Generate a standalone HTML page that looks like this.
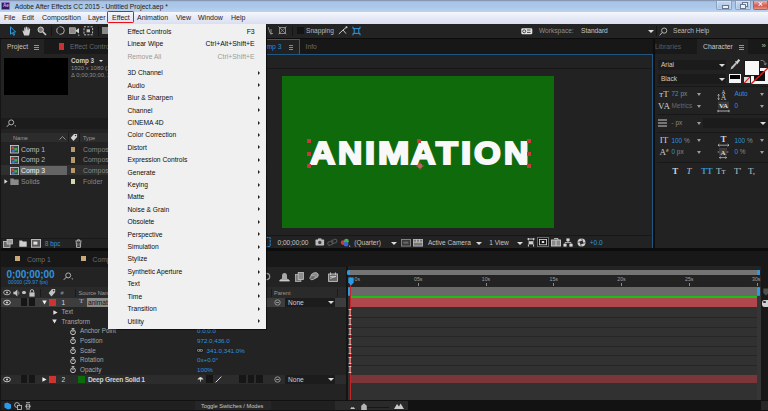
<!DOCTYPE html>
<html><head><meta charset="utf-8">
<style>
html,body{margin:0;padding:0;}
body{width:768px;height:411px;overflow:hidden;background:#242424;position:relative;font-family:"Liberation Sans",sans-serif;font-size:7px;color:#b8b8b8;}
div,span,svg{position:absolute;white-space:nowrap;}
.t{line-height:10px;height:10px;}
.blue{color:#3192de;}
#menu .i{left:19.5px;color:#0c0c0c;font-size:6.7px;line-height:10px;height:10px;}
#menu .s{right:11.5px;color:#0c0c0c;font-size:6.9px;line-height:10px;height:10px;}
#menu .a{left:149.5px;width:0;height:0;border-left:2.6px solid #222;border-top:2.4px solid transparent;border-bottom:2.4px solid transparent;}
.dd{width:0;height:0;border-top:3.4px solid #dadada;border-left:3px solid transparent;border-right:3px solid transparent;}
.dds{width:0;height:0;border-top:3px solid #9c9c9c;border-left:2.1px solid transparent;border-right:2.1px solid transparent;}
.sw{width:6px;height:8px;background:#161616;}
.row{left:0;width:346px;height:9.6px;}
.lab{left:80px;color:#a6a6a6;font-size:6.3px;line-height:9.6px;top:0;}
.val{left:197px;color:#3192de;font-size:6.2px;line-height:9.6px;top:0;}
</style></head><body>
<div id="title" style="left:0;top:0;width:768px;height:11.6px;background:linear-gradient(#6f7b93 0,#9db5d6 1px,#a7c3e6 2px,#acc8e9 7px,#b9d2ee 11.6px);">
  <div style="left:1.4px;top:1.8px;width:8.2px;height:7.8px;background:#2c1c58;border:0.7px solid #8f72c4;box-sizing:border-box;border-radius:1px;"></div>
  <div style="left:2.9px;top:3.4px;font-size:4.8px;line-height:5px;color:#c3acf7;font-weight:bold;">Ae</div>
  <div class="t" style="left:14.8px;top:1.5px;font-size:6.65px;color:#1a1a1a;">Adobe After Effects CC 2015 - Untitled Project.aep *</div>
  <div style="left:716px;top:1px;width:16.2px;height:9.2px;background:linear-gradient(#c6daf0,#a6c1e2);border:0.8px solid #89a2c2;border-top:none;box-sizing:border-box;border-radius:0 0 2px 2px;box-shadow:inset 0 0 0 0.6px rgba(255,255,255,.45);"><div style="left:4.6px;top:4.4px;width:5.6px;height:1.4px;background:#eef3f9;border:0.6px solid #66768f"></div></div>
  <div style="left:735px;top:1px;width:16.2px;height:9.2px;background:linear-gradient(#c6daf0,#a6c1e2);border:0.8px solid #89a2c2;border-top:none;box-sizing:border-box;border-radius:0 0 2px 2px;box-shadow:inset 0 0 0 0.6px rgba(255,255,255,.45);"><div style="left:6.4px;top:0.9px;width:4px;height:3.2px;background:#eef3f9;border:0.6px solid #66768f"></div><div style="left:4.4px;top:2.7px;width:4px;height:3.2px;background:#eef3f9;border:0.6px solid #66768f"></div></div>
  <div style="left:753px;top:1px;width:15.4px;height:9.2px;background:linear-gradient(#efb2a8,#de6a5e 50%,#d65848 60%,#e8968c);border:0.8px solid #a8655e;border-top:none;box-sizing:border-box;border-radius:0 0 2px 2px;"><div style="left:4px;top:-0.6px;font-size:8.4px;line-height:8.4px;color:#fff;font-weight:bold;text-shadow:0 0 1px #7a3028;">×</div></div>
</div>
<div id="mbar" style="left:0;top:11.6px;width:768px;height:12.1px;background:linear-gradient(#f5f7fc,#e8ebf7 45%,#dadff0);color:#1a1a1a;font-size:7px;">
  <div class="t" style="left:4px;top:1.4px;">File</div>
  <div class="t" style="left:22px;top:1.4px;">Edit</div>
  <div class="t" style="left:42px;top:1.4px;">Composition</div>
  <div class="t" style="left:88px;top:1.4px;">Layer</div>
  <div class="t" style="left:112px;top:1.4px;">Effect</div>
  <div class="t" style="left:137px;top:1.4px;">Animation</div>
  <div class="t" style="left:176px;top:1.4px;">View</div>
  <div class="t" style="left:198px;top:1.4px;">Window</div>
  <div class="t" style="left:231px;top:1.4px;">Help</div>
  <div style="left:107px;top:-0.3px;width:26.5px;height:11.5px;border:1.5px solid #ea0f18;box-sizing:border-box;border-radius:1.2px;"></div>
</div>
<div id="tool" style="left:0;top:23.7px;width:768px;height:13.8px;background:#232323;">
  <!-- selection arrow (blue) -->
  <svg style="left:9px;top:2px" width="8" height="10" viewBox="0 0 8 10"><path d="M1.5 0.8 L1.5 8.2 L3.3 6.6 L4.6 9.3 L5.6 8.8 L4.4 6.2 L6.6 6 Z" fill="none" stroke="#2f9be0" stroke-width="1"/></svg>
  <!-- hand -->
  <svg style="left:22px;top:2px" width="10" height="10" viewBox="0 0 10 10"><path d="M2.2 9.5 L1 6.5 L0.4 4.6 L1.4 4.4 L2.2 5.8 L2.2 1.6 L3.2 1.4 L3.6 4.4 L3.8 0.8 L4.9 0.8 L5.1 4.4 L5.6 1.2 L6.6 1.4 L6.5 4.6 L7.3 2.4 L8.2 2.7 L7.8 6.5 L7 9.5 Z" fill="#cfcfcf"/></svg>
  <!-- zoom -->
  <svg style="left:37px;top:2px" width="10" height="10" viewBox="0 0 10 10"><circle cx="3.7" cy="3.7" r="2.7" fill="#777" stroke="#cfcfcf" stroke-width="1"/><path d="M5.8 5.8 L9 9" stroke="#cfcfcf" stroke-width="1.6"/></svg>
  <div style="left:50.5px;top:2px;width:1px;height:10px;background:#151515"></div>
  <!-- rotate -->
  <svg style="left:55px;top:1.5px" width="11" height="11" viewBox="0 0 11 11"><circle cx="5.5" cy="5.5" r="3.8" fill="none" stroke="#bdbdbd" stroke-width="0.9" stroke-dasharray="7 1.2"/></svg>
  <!-- camera -->
  <svg style="left:69px;top:2px" width="12" height="11" viewBox="0 0 12 11"><rect x="0.3" y="1.8" width="6.2" height="5.8" fill="#8b8b8b" stroke="#c8c8c8" stroke-width="0.6"/><path d="M6.6 4.6 L10 2 L10 7.6 L6.6 5 Z" fill="#d0d0d0"/><rect x="9" y="8.6" width="1.4" height="1.2" fill="#999"/></svg>
  <!-- pan behind -->
  <svg style="left:83px;top:2px" width="11" height="10" viewBox="0 0 11 10"><rect x="1" y="0.8" width="8.6" height="8" fill="none" stroke="#bdbdbd" stroke-width="1" stroke-dasharray="2 1.3"/><rect x="3.6" y="3.3" width="3.4" height="3" fill="#bdbdbd"/></svg>
  <div style="left:97.5px;top:2px;width:1px;height:10px;background:#151515"></div>
  <div style="left:102px;top:3px;width:6px;height:7px;background:#8a8a8a;"></div>
  <!-- right of menu -->
  <svg style="left:268px;top:2px" width="9" height="10" viewBox="0 0 9 10"><path d="M0 1 L2.4 7.5 L5 7.5 M3 3 L3 8.6" stroke="#9a9a9a" stroke-width="0.9" fill="none"/></svg>
  <svg style="left:278px;top:2.5px" width="9" height="9" viewBox="0 0 9 9"><rect x="1.4" y="1.4" width="6" height="6" fill="none" stroke="#a0a0a0" stroke-width="0.8"/><path d="M0.4 0.4 L8.4 8.4 M8.4 0.4 L0.4 8.4" stroke="#a0a0a0" stroke-width="0.7"/></svg>
  <div style="left:291.5px;top:2px;width:1px;height:10px;background:#151515"></div>
  <div style="left:296.5px;top:3px;width:7.5px;height:7.5px;background:#141414;"></div>
  <div class="t" style="left:306px;top:2.8px;font-size:6.6px;color:#b9b9b9;">Snapping</div>
  <svg style="left:338px;top:2.5px" width="10" height="9" viewBox="0 0 10 9"><path d="M0.8 8 L5 4 L8.8 1 M5 4 L8 7.6" stroke="#c9c9c9" stroke-width="1" fill="none"/><circle cx="8.5" cy="1.3" r="1" fill="#c9c9c9"/></svg>
  <svg style="left:352px;top:2px" width="9" height="10" viewBox="0 0 9 10"><path d="M1 0.6 L1 2.6 L8 2.6 L8 0.6 M1 9.4 L1 7.4 L8 7.4 L8 9.4 M2.2 3 L2.2 7 M6.8 3 L6.8 7" stroke="#2f9be0" stroke-width="1" fill="none"/></svg>
  <!-- workspace -->
  <svg style="left:521px;top:4px" width="12" height="7" viewBox="0 0 12 7"><rect x="0.3" y="0.3" width="11" height="6" rx="1.3" fill="#e4e4e4"/><circle cx="3.2" cy="3.3" r="1.5" fill="none" stroke="#222" stroke-width="0.8"/><path d="M6 2 L9.6 2 M6 4.4 L9.6 4.4" stroke="#222" stroke-width="0.8"/></svg>
  <div class="t" style="left:539px;top:2.8px;font-size:6.6px;color:#8f8f8f;">Workspace:</div>
  <div class="t" style="left:581px;top:2.8px;font-size:6.6px;color:#c6c6c6;">Standard</div>
  <div class="dd" style="left:648px;top:6px;"></div>
  <div style="left:655.5px;top:2px;width:1px;height:10px;background:#151515"></div>
  <svg style="left:659px;top:3px" width="9" height="9" viewBox="0 0 9 9"><circle cx="5.2" cy="3.6" r="2.6" fill="none" stroke="#c0c0c0" stroke-width="0.9"/><path d="M3.3 5.5 L0.6 8.2" stroke="#c0c0c0" stroke-width="1"/></svg>
  <div class="t" style="left:673px;top:2.8px;font-size:6.6px;color:#bdbdbd;">Search Help</div>
</div>
<div style="left:0;top:37.5px;width:768px;height:1.2px;background:#0c0c0c;"></div>
<div id="proj" style="left:0;top:38.5px;width:266.5px;height:210px;background:#232323;">
  <div style="left:0;top:0;width:266.5px;height:15.5px;background:#191919;"></div>
  <div style="left:1px;top:0;width:43px;height:15.5px;background:#232323;"></div>
  <div class="t" style="left:7px;top:3.5px;color:#c4c4c4;font-size:6.8px;">Project</div>
  <svg style="left:33.5px;top:6px" width="5" height="5" viewBox="0 0 5 5"><path d="M0 0.5H5M0 2.5H5M0 4.5H5" stroke="#b0b0b0" stroke-width="0.8"/></svg>
  <div style="left:58.5px;top:4.5px;width:5.5px;height:6.5px;background:#c83232;"></div>
  <div class="t" style="left:70px;top:3.5px;color:#686868;font-size:6.8px;">Effect Controls</div>
  <div style="left:4px;top:19.5px;width:64px;height:37px;background:#000;"></div>
  <div class="t" style="left:71px;top:17.5px;color:#cdcdcd;font-weight:bold;font-size:6.3px;">Comp 3</div>
  <div class="dd" style="left:99px;top:21.5px;border-top-width:2.6px;border-left-width:2px;border-right-width:2px;border-top-color:#e0e0e0"></div>
  <div class="t" style="left:71px;top:24.9px;color:#8e8e8e;font-size:5.9px;">1920 x 1080 (1.00)</div>
  <div class="t" style="left:71px;top:31.6px;color:#8e8e8e;font-size:5.9px;">Δ 0;00;30;00, 29.97 fps</div>
  <!-- search -->
  <div style="left:1px;top:79.3px;width:266px;height:11.7px;background:#1c1c1c;"></div>
  <svg style="left:6px;top:80.5px" width="11" height="9" viewBox="0 0 11 9"><circle cx="5.2" cy="3.4" r="2.5" fill="none" stroke="#c0c0c0" stroke-width="0.9"/><path d="M3.3 5.2 L0.8 7.8" stroke="#c0c0c0" stroke-width="1"/><path d="M8.4 6.6 L10.2 6.6 L9.3 7.8Z" fill="#c0c0c0"/></svg>
  <!-- header -->
  <div style="left:1px;top:94.8px;width:266px;height:9.2px;background:#2c2c2c;"></div>
  <div class="t" style="left:13px;top:94.6px;color:#9a9a9a;font-size:5.6px;">Name</div>
  <svg style="left:59px;top:97.6px" width="7" height="4" viewBox="0 0 7 4"><path d="M0.5 3.5 L3.5 0.6 L6.5 3.5" fill="none" stroke="#9a9a9a" stroke-width="0.9"/></svg>
  <div style="left:67.5px;top:94.8px;width:1px;height:9.2px;background:#1c1c1c"></div>
  <svg style="left:69.5px;top:94.8px" width="8" height="8.6" viewBox="0 0 8 9"><path d="M0.6 5 L4 1 L7.2 1 L7.2 4.2 L3.4 8.4 Z" fill="#d4d4d4"/><circle cx="5.6" cy="2.6" r="0.8" fill="#2c2c2c"/></svg>
  <div style="left:79px;top:94.8px;width:1px;height:9.2px;background:#1c1c1c"></div>
  <div class="t" style="left:83px;top:94.6px;color:#9a9a9a;font-size:5.6px;">Type</div>
  <div style="left:1px;top:126.8px;width:266px;height:10.2px;background:#2f2f2f;"></div>
  <div style="left:19.8px;top:127.2px;width:46.8px;height:9.5px;background:#646464;"></div>
  <div class="t" style="left:21px;top:106.0px;color:#bdbdbd;font-size:6.9px;">Comp 1</div>
  <div class="t" style="left:83px;top:106.0px;color:#858585;font-size:6.9px;">Composition</div>
  <svg style="left:10px;top:106.8px" width="9" height="8.4" viewBox="0 0 9 8.4"><rect x="0.4" y="0.4" width="8.2" height="7.6" fill="#3a4a5a" stroke="#d8d8d8" stroke-width="0.8"/><rect x="1.6" y="1.6" width="2.6" height="2.4" fill="#d8442f"/><rect x="4.4" y="3" width="2.8" height="2.6" fill="#3fae49"/><rect x="2.2" y="4.6" width="2.4" height="2.2" fill="#3a7fd0"/></svg>
  <div style="left:70.5px;top:108.2px;width:4.6px;height:5.2px;background:#b89a6a;"></div>
  <div class="t" style="left:21px;top:116.7px;color:#bdbdbd;font-size:6.9px;">Comp 2</div>
  <div class="t" style="left:83px;top:116.7px;color:#858585;font-size:6.9px;">Composition</div>
  <svg style="left:10px;top:117.5px" width="9" height="8.4" viewBox="0 0 9 8.4"><rect x="0.4" y="0.4" width="8.2" height="7.6" fill="#3a4a5a" stroke="#d8d8d8" stroke-width="0.8"/><rect x="1.6" y="1.6" width="2.6" height="2.4" fill="#d8442f"/><rect x="4.4" y="3" width="2.8" height="2.6" fill="#3fae49"/><rect x="2.2" y="4.6" width="2.4" height="2.2" fill="#3a7fd0"/></svg>
  <div style="left:70.5px;top:118.9px;width:4.6px;height:5.2px;background:#b89a6a;"></div>
  <div class="t" style="left:21px;top:127.4px;color:#f2f2f2;font-size:6.9px;">Comp 3</div>
  <div class="t" style="left:83px;top:127.4px;color:#858585;font-size:6.9px;">Composition</div>
  <svg style="left:10px;top:128.2px" width="9" height="8.4" viewBox="0 0 9 8.4"><rect x="0.4" y="0.4" width="8.2" height="7.6" fill="#3a4a5a" stroke="#d8d8d8" stroke-width="0.8"/><rect x="1.6" y="1.6" width="2.6" height="2.4" fill="#d8442f"/><rect x="4.4" y="3" width="2.8" height="2.6" fill="#3fae49"/><rect x="2.2" y="4.6" width="2.4" height="2.2" fill="#3a7fd0"/></svg>
  <div style="left:70.5px;top:129.6px;width:4.6px;height:5.2px;background:#b89a6a;"></div>
  <div class="t" style="left:21px;top:138.1px;color:#8f8f8f;font-size:6.9px;">Solids</div>
  <div class="t" style="left:83px;top:138.1px;color:#858585;font-size:6.9px;">Folder</div>
  <svg style="left:4px;top:140.6px" width="4" height="5" viewBox="0 0 4 5"><path d="M0.4 0.3 L3.6 2.5 L0.4 4.7Z" fill="#d8d8d8"/></svg>
  <svg style="left:10px;top:139.3px" width="9" height="7.5" viewBox="0 0 9 7.5"><path d="M0.3 0.6 L3.4 0.6 L4.2 1.6 L8.7 1.6 L8.7 7.2 L0.3 7.2Z" fill="#8a8a8a"/></svg>
  <div style="left:70.5px;top:140.3px;width:4.6px;height:5.2px;background:#d2d8a8;"></div>
  <!-- bottom bar -->
  <div style="left:0;top:199.3px;width:266.5px;height:1px;background:#191919;"></div>
  <svg style="left:3px;top:200.8px" width="10" height="9" viewBox="0 0 10 9"><rect x="0.4" y="2.4" width="6.6" height="6" fill="#6a6a6a" stroke="#c8c8c8" stroke-width="0.8"/><rect x="4" y="0.4" width="5.4" height="4.6" fill="#9a9a9a" stroke="#d0d0d0" stroke-width="0.7"/></svg>
  <svg style="left:18.5px;top:201.8px" width="8" height="7" viewBox="0 0 8 7"><path d="M0.3 0.5 L3 0.5 L3.8 1.5 L7.7 1.5 L7.7 6.7 L0.3 6.7Z" fill="#cfcfcf"/></svg>
  <svg style="left:30.8px;top:200.8px" width="10" height="9" viewBox="0 0 10 9"><rect x="0.4" y="0.6" width="9.2" height="7.6" fill="#5a5a5a" stroke="#d0d0d0" stroke-width="0.9"/><rect x="2.4" y="2.6" width="4" height="3" fill="#e0e0e0"/></svg>
  <div class="t blue" style="left:45px;top:200.3px;font-size:6.3px;">8 bpc</div>
  <svg style="left:75px;top:200.6px" width="7" height="9" viewBox="0 0 7 9"><path d="M0.4 2 H6.6 M2.4 2 V0.8 H4.6 V2 M1.2 2.4 L1.6 8.4 H5.4 L5.8 2.4" fill="none" stroke="#bdbdbd" stroke-width="0.9"/><path d="M2.8 3.6V7.2M4.2 3.6V7.2" stroke="#bdbdbd" stroke-width="0.6"/></svg>
</div>
<div id="comp" style="left:266.5px;top:38.5px;width:386.5px;height:210px;background:#222;">
  <div style="left:0;top:0;width:386.5px;height:16px;background:#171717;"></div>
  <div style="left:0;top:0;width:33.5px;height:16.6px;background:#212121;border-right:1px solid #23608c;border-top:1px solid #23608c;box-sizing:border-box;"></div>
  <div class="t" style="left:-8.8px;top:3.5px;color:#2f8ad2;font-size:6.8px;">Comp 3</div>
  <svg style="left:22.8px;top:6px" width="4.2" height="5" viewBox="0 0 5 5" preserveAspectRatio="none"><path d="M0 0.5H5M0 2.5H5M0 4.5H5" stroke="#b0b0b0" stroke-width="0.8"/></svg>
  <div class="t" style="left:39px;top:3.5px;color:#6a6a6a;font-size:6.8px;">Info</div>
  <div style="left:0;top:15.8px;width:386.2px;height:194.3px;border:1px solid #205680;border-left:none;box-sizing:border-box;"></div>
  <div style="left:0px;top:29.5px;width:385px;height:1px;background:#171717;"></div>
  <div style="left:15.9px;top:37px;width:271.6px;height:152.5px;background:#0f6a0b;"></div>
  <div style="left:43.21px;top:94.70px;font-weight:bold;font-size:31.6px;line-height:40px;height:40px;color:#f8f8f8;-webkit-text-stroke:2.1px #f8f8f8;transform-origin:0 0;transform:scaleX(1.1038);">A</div>
  <div style="left:71.32px;top:94.70px;font-weight:bold;font-size:31.6px;line-height:40px;height:40px;color:#f8f8f8;-webkit-text-stroke:2.1px #f8f8f8;transform-origin:0 0;transform:scaleX(1.0617);">N</div>
  <div style="left:98.50px;top:94.70px;font-weight:bold;font-size:31.6px;line-height:40px;height:40px;color:#f8f8f8;-webkit-text-stroke:2.1px #f8f8f8;transform-origin:0 0;transform:scaleX(1.1401);">I</div>
  <div style="left:111.35px;top:94.70px;font-weight:bold;font-size:31.6px;line-height:40px;height:40px;color:#f8f8f8;-webkit-text-stroke:2.1px #f8f8f8;transform-origin:0 0;transform:scaleX(1.1898);">M</div>
  <div style="left:144.90px;top:94.70px;font-weight:bold;font-size:31.6px;line-height:40px;height:40px;color:#f8f8f8;-webkit-text-stroke:2.1px #f8f8f8;transform-origin:0 0;transform:scaleX(1.0746);">A</div>
  <div style="left:169.37px;top:94.70px;font-weight:bold;font-size:31.6px;line-height:40px;height:40px;color:#f8f8f8;-webkit-text-stroke:2.1px #f8f8f8;transform-origin:0 0;transform:scaleX(1.1319);">T</div>
  <div style="left:194.79px;top:94.70px;font-weight:bold;font-size:31.6px;line-height:40px;height:40px;color:#f8f8f8;-webkit-text-stroke:2.1px #f8f8f8;transform-origin:0 0;transform:scaleX(1.1540);">I</div>
  <div style="left:207.54px;top:94.70px;font-weight:bold;font-size:31.6px;line-height:40px;height:40px;color:#f8f8f8;-webkit-text-stroke:2.1px #f8f8f8;transform-origin:0 0;transform:scaleX(1.0877);">O</div>
  <div style="left:237.06px;top:94.70px;font-weight:bold;font-size:31.6px;line-height:40px;height:40px;color:#f8f8f8;-webkit-text-stroke:2.1px #f8f8f8;transform-origin:0 0;transform:scaleX(1.0712);">N</div>
  <div style="left:40.0px;top:100.0px;width:4px;height:4px;background:#c53a3a;"></div>
  <div style="left:40.0px;top:113.0px;width:4px;height:4px;background:#c53a3a;"></div>
  <div style="left:40.0px;top:125.5px;width:4px;height:4px;background:#c53a3a;"></div>
  <div style="left:150.5px;top:100.0px;width:4px;height:4px;background:#c53a3a;"></div>
  <div style="left:260.0px;top:100.0px;width:4px;height:4px;background:#c53a3a;"></div>
  <div style="left:260.0px;top:113.0px;width:4px;height:4px;background:#c53a3a;"></div>
  <div style="left:260.0px;top:125.5px;width:4px;height:4px;background:#c53a3a;"></div>
  <svg style="left:149px;top:123px" width="8" height="8" viewBox="0 0 8 8"><circle cx="4" cy="4" r="2.2" fill="#b08080" stroke="#c85050" stroke-width="0.8"/><path d="M4 0V8M0 4H8" stroke="#c85050" stroke-width="0.7"/></svg>
  <div style="left:0px;top:196.8px;width:385px;height:1px;background:#171717;"></div>
  <svg style="left:-1px;top:198px" width="5" height="10" viewBox="0 0 5 10"><path d="M0 0.6H4.2V9.4H0" fill="none" stroke="#3192de" stroke-width="0.9" stroke-dasharray="2.5 0.8"/></svg>
  <div class="t" style="left:11px;top:199px;color:#c4c4c4;font-size:6.55px;">0;00;00;00</div>
  <svg style="left:48px;top:199.5px" width="10" height="8" viewBox="0 0 10 8"><rect x="0.5" y="1.6" width="8.6" height="5.8" rx="0.6" fill="#bdbdbd"/><rect x="3" y="0.4" width="3.4" height="1.6" fill="#bdbdbd"/><circle cx="4.8" cy="4.5" r="1.7" fill="#444"/></svg>
  <svg style="left:60px;top:199px" width="11" height="9" viewBox="0 0 11 9"><rect x="0.6" y="3.6" width="5.4" height="3.4" rx="1.6" fill="none" stroke="#585858" stroke-width="1" transform="rotate(-25 3 5)"/><rect x="4.6" y="1.8" width="5.4" height="3.4" rx="1.6" fill="none" stroke="#585858" stroke-width="1" transform="rotate(-25 7 3.5)"/></svg>
  <svg style="left:73px;top:199px" width="11" height="10" viewBox="0 0 11 10"><circle cx="3.2" cy="4.6" r="2.4" fill="#d23a3a"/><circle cx="6.4" cy="3.2" r="2.4" fill="#3db54a"/><circle cx="6" cy="6.2" r="2.4" fill="#3b62d8"/><rect x="9.2" y="7.6" width="1" height="1.2" fill="#bbb"/></svg>
  <div class="t" style="left:87.8px;top:199px;color:#c4c4c4;font-size:6.55px;">(Quarter)</div>
  <div class="dd" style="left:124.5px;top:203px;"></div>
  <svg style="left:134.5px;top:200px" width="10" height="8" viewBox="0 0 10 8"><rect x="0.5" y="0.5" width="9" height="6.6" fill="#3a3a3a" stroke="#8a8a8a" stroke-width="0.9"/><rect x="2.4" y="2.6" width="5" height="2" fill="#6a6a6a"/></svg>
  <svg style="left:146.5px;top:200px" width="10" height="8" viewBox="0 0 10 8"><rect x="0.5" y="0.5" width="9" height="6.6" fill="#777" stroke="#b4b4b4" stroke-width="0.9"/><path d="M0.5 3.2H9.5M3.4 0.5V3.2M6.4 0.5V3.2" stroke="#d8d8d8" stroke-width="0.7"/></svg>
  <div class="t" style="left:161.4px;top:199px;color:#c4c4c4;font-size:6.55px;">Active Camera</div>
  <div class="dd" style="left:209.5px;top:203px;"></div>
  <div class="t" style="left:222.8px;top:199px;color:#c4c4c4;font-size:6.55px;">1 View</div>
  <div class="dd" style="left:250.5px;top:203px;"></div>
  <svg style="left:260.5px;top:199.5px" width="8" height="9" viewBox="0 0 8 9"><path d="M0.4 1H7.6M1.4 0V2.4M6.6 0V2.4" stroke="#d0d0d0" stroke-width="1"/><rect x="1.6" y="3.2" width="4.8" height="3.2" fill="#d0d0d0"/><path d="M1.4 6.4V8.6M6.6 6.4V8.6" stroke="#d0d0d0" stroke-width="1"/></svg>
  <div style="left:270.2px;top:198.4px;width:12px;height:10.4px;background:#141414;border:0.8px solid #6a6a6a;box-sizing:border-box;"></div>
  <svg style="left:272px;top:200.4px" width="8" height="7" viewBox="0 0 8 7"><rect x="0.4" y="0.4" width="7.2" height="5.4" fill="none" stroke="#e0e0e0" stroke-width="0.8"/><rect x="2.8" y="2" width="2.4" height="2" fill="#e0e0e0"/></svg>
  <svg style="left:284.5px;top:199.5px" width="10" height="9" viewBox="0 0 10 9"><rect x="0.5" y="2" width="9" height="6" fill="#8a8a8a" stroke="#cfcfcf" stroke-width="0.9"/><path d="M3 0.6H7V2M5 2V8" stroke="#cfcfcf" stroke-width="0.9" fill="none"/></svg>
  <svg style="left:296.5px;top:199.5px" width="10" height="9" viewBox="0 0 10 9"><rect x="3.4" y="0.4" width="3.2" height="2.8" fill="#d4d4d4"/><rect x="0.4" y="5.8" width="3.2" height="2.8" fill="#d4d4d4"/><rect x="6.4" y="5.8" width="3.2" height="2.8" fill="#d4d4d4"/><path d="M5 3V4.6M2 5.8V4.6H8V5.8" fill="none" stroke="#d4d4d4" stroke-width="0.8"/></svg>
  <svg style="left:310.5px;top:199.5px" width="9" height="9" viewBox="0 0 9 9"><circle cx="4.5" cy="4.5" r="4" fill="#cfcfcf"/><circle cx="4.5" cy="4.5" r="1.8" fill="#2a2a2a"/><path d="M4.5 0.5L5.6 3M8.5 4.5L6 5.4M4.5 8.5L3.4 6M0.5 4.5L3 3.6" stroke="#2a2a2a" stroke-width="0.6"/></svg>
  <div class="t blue" style="left:323.3px;top:199px;font-size:6.55px;">+0.0</div>
</div>
<div style="left:652.8px;top:38.5px;width:1.8px;height:212px;background:#0e0e0e;"></div>
<div id="right" style="left:654.5px;top:38.5px;width:113.5px;height:212.5px;background:#222;">
  <div style="left:0;top:0;width:113.5px;height:15.5px;background:#191919;"></div>
  <div style="left:42.5px;top:0;width:50.5px;height:15.5px;background:#222;"></div>
  <div class="t" style="left:0.5px;top:3.5px;color:#5c5c5c;font-size:6.8px;">Libraries</div>
  <div class="t" style="left:48.5px;top:3.5px;color:#c8c8c8;font-size:6.8px;">Character</div>
  <svg style="left:84px;top:6px" width="5" height="5" viewBox="0 0 5 5"><path d="M0 0.5H5M0 2.5H5M0 4.5H5" stroke="#b0b0b0" stroke-width="0.8"/></svg>
  <div class="t" style="left:107px;top:2.5px;color:#b8b8b8;font-size:8px;">»</div>
  <!-- font dropdowns -->
  <div style="left:3.5px;top:21px;width:68px;height:10px;background:#1b1b1b;"></div>
  <div class="t" style="left:6.5px;top:21px;color:#cfcfcf;font-size:6.5px;">Arial</div>
  <div class="dd" style="left:64.3px;top:25px;"></div>
  <div style="left:3.5px;top:35.5px;width:68px;height:10px;background:#1b1b1b;"></div>
  <div class="t" style="left:6.5px;top:35.5px;color:#cfcfcf;font-size:6.5px;">Black</div>
  <div class="dd" style="left:64.3px;top:39.5px;"></div>
  <!-- eyedropper -->
  <svg style="left:75.5px;top:20.5px" width="10" height="11" viewBox="0 0 10 11"><path d="M0.6 10.4 L1.2 8 L5.6 3.4 L7 4.8 L2.8 9.6 Z" fill="#bdbdbd"/><path d="M5.4 2.4 L7.8 4.8 M6.4 3.4 L8.6 0.8 L9.4 1.6 L7.2 4" stroke="#d0d0d0" stroke-width="1.2" fill="none"/></svg>
  <!-- stroke swatch -->
  <div style="left:96.5px;top:29.5px;width:17px;height:16px;background:#f4f4f4;"></div>
  <div style="left:99.5px;top:32.5px;width:11px;height:10px;background:#111;"></div>
  <svg style="left:96.5px;top:29.5px" width="17" height="16" viewBox="0 0 17 16"><path d="M0 16L17 0" stroke="#e01b1b" stroke-width="1.4"/></svg>
  <!-- fill swatch -->
  <div style="left:89px;top:21px;width:16px;height:16.4px;background:#f8f8f8;border:0.6px solid #1a1a1a;box-sizing:border-box;"></div>
  <svg style="left:105.5px;top:20.5px" width="7" height="7" viewBox="0 0 7 7"><path d="M0.6 1.6 Q4.6 0.6 5.4 5.4 M3.8 4.6 L5.4 6 L6.4 4.2" fill="none" stroke="#9a9a9a" stroke-width="0.8"/></svg>
  <!-- small swatches -->
  <div style="left:74.5px;top:35.8px;width:11.5px;height:9px;background:#f4f4f4;"></div>
  <div style="left:75.3px;top:36.5px;width:10px;height:3.6px;background:#000;"></div>
  <div style="left:89.5px;top:38.2px;width:6px;height:6.4px;background:#d9d9d9;"></div>
  <svg style="left:89.5px;top:38.2px" width="6" height="6.4" viewBox="0 0 6 6.4"><path d="M0 6.4L6 0" stroke="#e01b1b" stroke-width="1.1"/></svg>
  <div style="left:2.5px;top:47.6px;width:111px;height:1px;background:#181818;"></div>
  <div style="left:2.5px;top:75.4px;width:111px;height:1px;background:#181818;"></div>
  <div style="left:2.5px;top:93.3px;width:111px;height:1px;background:#181818;"></div>
  <div style="left:2.5px;top:123.4px;width:111px;height:1px;background:#181818;"></div>
  <div class="t" style="left:3.5px;top:50.2px;width:12px;text-align:center;font-family:'Liberation Serif',serif;font-size:9px;color:#cfcfcf;">тT</div>
  <div class="t" style="left:17px;top:50.7px;font-size:6.4px;"><span style="position:static;color:#3192de">72</span><span style="position:static;color:#8a8a8a"> px</span></div>
  <div class="dds" style="left:42.3px;top:54.3px;"></div>
  <div class="t" style="left:62.5px;top:50.2px;width:12px;text-align:center;font-family:'Liberation Serif',serif;font-size:9px;color:#cfcfcf;"></div>
  <div class="t" style="left:80px;top:50.7px;font-size:6.4px;"><span style="position:static;color:#3192de">Auto</span><span style="position:static;color:#8a8a8a"></span></div>
  <div class="dds" style="left:105.9px;top:54.3px;"></div>
  <div class="t" style="left:3.5px;top:62.0px;width:12px;text-align:center;font-family:'Liberation Serif',serif;font-size:9px;color:#cfcfcf;">VA</div>
  <div class="t" style="left:17px;top:62.5px;font-size:6.4px;"><span style="position:static;color:#6a6a6a">Metrics</span><span style="position:static;color:#8a8a8a"></span></div>
  <div class="dds" style="left:42.3px;top:66.1px;"></div>
  <div class="t" style="left:62.5px;top:62.0px;width:12px;text-align:center;font-family:'Liberation Serif',serif;font-size:9px;color:#cfcfcf;"></div>
  <div class="t" style="left:80px;top:62.5px;font-size:6.4px;"><span style="position:static;color:#3192de">0</span><span style="position:static;color:#8a8a8a"></span></div>
  <div class="dds" style="left:105.9px;top:66.1px;"></div>
  <div class="t" style="left:3.5px;top:96.5px;width:12px;text-align:center;font-family:'Liberation Serif',serif;font-size:9px;color:#cfcfcf;">IT</div>
  <div class="t" style="left:17px;top:97.0px;font-size:6.4px;"><span style="position:static;color:#3192de">100</span><span style="position:static;color:#8a8a8a"> %</span></div>
  <div class="dds" style="left:42.3px;top:100.6px;"></div>
  <div class="t" style="left:62.5px;top:96.5px;width:12px;text-align:center;font-family:'Liberation Serif',serif;font-size:9px;color:#cfcfcf;"></div>
  <div class="t" style="left:80px;top:97.0px;font-size:6.4px;"><span style="position:static;color:#3192de">100</span><span style="position:static;color:#8a8a8a"> %</span></div>
  <div class="dds" style="left:105.9px;top:100.6px;"></div>
  <div class="t" style="left:3.5px;top:108.0px;width:12px;text-align:center;font-family:'Liberation Serif',serif;font-size:9px;color:#cfcfcf;">Aª</div>
  <div class="t" style="left:17px;top:108.5px;font-size:6.4px;"><span style="position:static;color:#3192de">0</span><span style="position:static;color:#8a8a8a"> px</span></div>
  <div class="dds" style="left:42.3px;top:112.1px;"></div>
  <div class="t" style="left:62.5px;top:108.0px;width:12px;text-align:center;font-family:'Liberation Serif',serif;font-size:9px;color:#cfcfcf;"></div>
  <div class="t" style="left:80px;top:108.5px;font-size:6.4px;"><span style="position:static;color:#3192de">0</span><span style="position:static;color:#8a8a8a"> %</span></div>
  <div class="dds" style="left:105.9px;top:112.1px;"></div>
  <svg style="left:62px;top:50px" width="13" height="12" viewBox="0 0 13 12"><text x="6.5" y="4.6" text-anchor="middle" font-family="Liberation Serif, serif" font-size="5.4" fill="#cfcfcf">A</text><text x="6.5" y="10.6" text-anchor="middle" font-family="Liberation Serif, serif" font-size="7.6" fill="#cfcfcf">A</text><path d="M1.6 5.4V10.6M0.6 6.6L1.6 5.2L2.6 6.6M0.6 9.4L1.6 10.8L2.6 9.4" stroke="#cfcfcf" stroke-width="0.6" fill="none"/></svg>
  <svg style="left:62px;top:62.5px" width="13" height="12" viewBox="0 0 13 12"><rect x="1" y="0.6" width="11" height="7" fill="#3a3a3a"/><text x="6.5" y="6.6" text-anchor="middle" font-family="Liberation Serif, serif" font-size="7" font-weight="bold" fill="#dcdcdc">VA</text><path d="M1 10H12M1 8.8V11.2M12 8.8V11.2" stroke="#cfcfcf" stroke-width="0.8" fill="none"/></svg>
  <svg style="left:62px;top:96px" width="13" height="12" viewBox="0 0 13 12"><text x="6.5" y="7.4" text-anchor="middle" font-family="Liberation Serif, serif" font-size="9" font-weight="bold" fill="#d4d4d4">T</text><path d="M1 10.2H12M2.4 9L1 10.2L2.4 11.4M10.6 9L12 10.2L10.6 11.4" stroke="#cfcfcf" stroke-width="0.7" fill="none"/></svg>
  <svg style="left:62.5px;top:108px" width="12" height="12" viewBox="0 0 12 12"><rect x="2" y="1" width="8" height="7.6" fill="#3c3c3c"/><text x="6" y="7.6" text-anchor="middle" font-family="Liberation Serif, serif" font-size="7" font-weight="bold" fill="#d4d4d4">A</text><path d="M0.6 5H2.2M9.8 5H11.4M2.4 10.6H9.6M3.6 9.6L2.4 10.6L3.6 11.6M8.4 9.6L9.6 10.6L8.4 11.6" stroke="#cfcfcf" stroke-width="0.7" fill="none"/></svg>
  <svg style="left:3.5px;top:80.5px" width="9" height="8" viewBox="0 0 9 8"><path d="M0 1H9M0 4H9M0 7H9" stroke="#c8c8c8" stroke-width="1.2"/></svg>
  <div class="t" style="left:17px;top:79.5px;font-size:6.4px;"><span style="position:static;color:#3192de">-</span><span style="position:static;color:#8a8a8a"> px</span></div>
  <div class="dds" style="left:42.3px;top:83px;"></div>
  <div style="left:48.5px;top:79.8px;width:65px;height:10px;background:#1b1b1b;"></div>
  <div class="dd" style="left:105.5px;top:83.5px;"></div>
  <div class="t" style="left:17.8px;top:127.0px;font-family:'Liberation Serif',serif;font-size:9px;color:#d0d0d0;font-weight:bold">T</div>
  <div class="t" style="left:32.0px;top:127.0px;font-family:'Liberation Serif',serif;font-size:9px;color:#c0c0c0;font-style:italic">T</div>
  <div class="t" style="left:46.5px;top:127.0px;font-family:'Liberation Serif',serif;font-size:9px;color:#3192de;letter-spacing:-0.3px;font-weight:bold">TT</div>
  <div class="t" style="left:61.5px;top:127.0px;font-family:'Liberation Serif',serif;font-size:9px;color:#c0c0c0;">Tт</div>
  <div class="t" style="left:79.5px;top:127.0px;font-family:'Liberation Serif',serif;font-size:9px;color:#c0c0c0;">T'</div>
  <div class="t" style="left:93.5px;top:127.0px;font-family:'Liberation Serif',serif;font-size:9px;color:#c0c0c0;">T,</div>
</div>
<div style="left:0;top:248.2px;width:768px;height:2.8px;background:#0c0c0c;"></div>
<div id="tl" style="left:0;top:251px;width:768px;height:160px;background:#232323;">
  <div style="left:0;top:0;width:768px;height:15.8px;background:#181818;"></div>
  <div style="left:15px;top:5px;width:5px;height:5.4px;background:#c9a977;"></div>
  <div class="t" style="left:27px;top:3.6px;color:#6c6c6c;font-size:6.8px;">Comp 1</div>
  <div style="left:80.5px;top:5px;width:5px;height:5.4px;background:#c9a977;"></div>
  <div class="t" style="left:92.5px;top:3.6px;color:#6c6c6c;font-size:6.8px;">Comp 2</div>
  <!-- time -->
  <div class="t" style="left:6.5px;top:17.5px;color:#3192de;font-size:10px;font-weight:bold;line-height:12px;height:12px;letter-spacing:-0.1px;">0;00;00;00</div>
  <div class="t" style="left:8px;top:28px;color:#3192de;font-size:5.1px;line-height:7px;height:7px;">00000 (29.97 fps)</div>
  <svg style="left:62.5px;top:20.5px" width="11" height="9" viewBox="0 0 11 9"><circle cx="5.2" cy="3.4" r="2.5" fill="none" stroke="#c0c0c0" stroke-width="0.9"/><path d="M3.3 5.2 L0.8 7.8" stroke="#c0c0c0" stroke-width="1"/><path d="M8.4 6.6 L10.2 6.6 L9.3 7.8Z" fill="#c0c0c0"/></svg>
  <!-- toolbar icons -->
  <svg style="left:279px;top:21px" width="11" height="10" viewBox="0 0 11 10"><path d="M1 9 L1 7.4 L3 6.6 L3 4 Q3 1 5.5 1 Q8 1 8 4 L8 6.6 L10 7.4 L10 9Z" fill="#a8a8a8"/><rect x="0.4" y="8" width="10.2" height="1.4" fill="#c8c8c8"/></svg>
  <svg style="left:294.5px;top:20.5px" width="9" height="10" viewBox="0 0 9 10"><rect x="0.5" y="2.4" width="5.4" height="7" fill="#777" stroke="#b8b8b8" stroke-width="0.8"/><rect x="3.2" y="0.5" width="5.2" height="7" fill="#8c8c8c" stroke="#c4c4c4" stroke-width="0.8"/></svg>
  <svg style="left:308.5px;top:21px" width="10" height="9" viewBox="0 0 10 9"><ellipse cx="5.6" cy="3.6" rx="3.8" ry="2.8" fill="#8a8a8a" stroke="#c0c0c0" stroke-width="0.8" transform="rotate(-20 5.6 3.6)"/><ellipse cx="3.6" cy="5.6" rx="2.8" ry="2" fill="#6a6a6a" stroke="#b0b0b0" stroke-width="0.8" transform="rotate(-20 3.6 5.6)"/></svg>
  <svg style="left:328px;top:20.5px" width="10" height="10" viewBox="0 0 10 10"><rect x="0.6" y="2" width="8.8" height="7.4" fill="#666" stroke="#c4c4c4" stroke-width="0.9"/><path d="M2.6 0.4V3M7.4 0.4V3M2 4.4H8M2 6.4L8 4.4" stroke="#d8d8d8" stroke-width="0.8"/></svg>
  <svg style="left:262px;top:21px" width="9" height="9" viewBox="0 0 9 9"><circle cx="4.5" cy="4.5" r="3.2" fill="none" stroke="#9a9a9a" stroke-width="1.2"/></svg>
  <!-- column header -->
  <div style="left:0;top:36px;width:346px;height:10.6px;background:#2a2a2a;"></div>
  <svg style="left:3px;top:38px" width="8" height="7" viewBox="0 0 8 7"><ellipse cx="4" cy="3.5" rx="3.4" ry="2.3" fill="none" stroke="#c0c0c0" stroke-width="0.9"/><circle cx="4" cy="3.5" r="1" fill="#c0c0c0"/></svg>
  <svg style="left:12.5px;top:37.5px" width="7" height="8" viewBox="0 0 7 8"><path d="M0.4 2.8H2L4.4 0.6V7.4L2 5.2H0.4Z" fill="#c4c4c4"/><path d="M5.4 2.4Q6.6 4 5.4 5.6" fill="none" stroke="#c4c4c4" stroke-width="0.6"/></svg>
  <div style="left:22px;top:39.8px;width:3.6px;height:3.6px;border-radius:2px;background:#c4c4c4;"></div>
  <svg style="left:29px;top:37.5px" width="6" height="8" viewBox="0 0 6 8"><rect x="0.4" y="3.4" width="5.2" height="4.2" fill="#c4c4c4"/><path d="M1.4 3.4V2Q1.4 0.6 3 0.6Q4.6 0.6 4.6 2V3.4" fill="none" stroke="#c4c4c4" stroke-width="0.9"/></svg>
  <div style="left:39.5px;top:37.5px;width:1px;height:8px;background:#1a1a1a"></div>
  <svg style="left:47.5px;top:37px" width="8" height="9" viewBox="0 0 8 9"><path d="M0.6 5 L4 1 L7.2 1 L7.2 4.2 L3.4 8.4 Z" fill="#c4c4c4"/><circle cx="5.6" cy="2.6" r="0.8" fill="#2a2a2a"/></svg>
  <div class="t" style="left:60.5px;top:37px;font-size:5.6px;color:#9a9a9a;">#</div>
  <div style="left:74.5px;top:37.5px;width:1px;height:8px;background:#1a1a1a"></div>
  <div class="t" style="left:78.5px;top:37px;font-size:5.6px;color:#9a9a9a;">Source Name</div>
  <div style="left:270.5px;top:37.5px;width:1px;height:8px;background:#1a1a1a"></div>
  <div class="t" style="left:274px;top:37px;font-size:5.6px;color:#9a9a9a;">Parent</div>
  <div style="left:337px;top:37.5px;width:1px;height:8px;background:#1a1a1a"></div>
  <div class="row" style="top:46.60px;background:#3d3d3d;">
    <svg style="left:3px;top:1.6px" width="8" height="7" viewBox="0 0 8 7"><ellipse cx="4" cy="3.5" rx="3.4" ry="2.3" fill="none" stroke="#d4d4d4" stroke-width="0.9"/><circle cx="4" cy="3.5" r="1" fill="#d4d4d4"/></svg>
    <div class="sw" style="left:21px;top:0.8px;"></div><div class="sw" style="left:29px;top:0.8px;"></div>
    <svg style="left:41.5px;top:2.6px" width="5" height="5" viewBox="0 0 5 5"><path d="M0.2 0.6H4.8L2.5 4.6Z" fill="#f0f0f0"/></svg>
    <div style="left:49px;top:1.4px;width:7px;height:6.8px;background:#cc3434;"></div>
    <div class="t" style="left:61.5px;top:0;line-height:9.6px;font-size:6.6px;color:#d8d8d8;">1</div>
    <div class="t" style="left:79px;top:-0.2px;line-height:9.6px;font-size:7px;color:#9a9a9a;font-family:'Liberation Serif',serif;font-weight:bold;">T</div>
    <div style="left:86.5px;top:0.6px;width:60px;height:8.4px;background:#8a8a8a;"></div>
    <div class="t" style="left:88px;top:0;line-height:9.6px;font-size:6.6px;color:#111;">animation</div>
    <svg style="left:273.6px;top:1.6px" width="7" height="7" viewBox="0 0 7 7"><circle cx="3.5" cy="3.5" r="2.7" fill="none" stroke="#a8a8a8" stroke-width="0.8"/><path d="M2 3.5H5" stroke="#a8a8a8" stroke-width="0.8"/></svg>
    <div style="left:284.5px;top:0.7px;width:50.5px;height:8.4px;background:#1c1c1c;"></div>
    <div class="t" style="left:288px;top:0;line-height:9.6px;font-size:6.6px;color:#cfcfcf;">None</div>
    <div class="dd" style="left:327.5px;top:3.4px;"></div>
  </div>
  <div class="row" style="top:56.22px;"><svg style="left:52.5px;top:2.4px" width="5" height="5" viewBox="0 0 5 5"><path d="M0.4 0.2L4.6 2.5L0.4 4.8Z" fill="#e0e0e0"/></svg><div class="lab" style="left:61.5px;">Text</div></div>
  <div class="row" style="top:65.84px;"><svg style="left:52px;top:2.6px" width="5" height="5" viewBox="0 0 5 5"><path d="M0.2 0.6H4.8L2.5 4.6Z" fill="#e0e0e0"/></svg><div class="lab" style="left:61.5px;">Transform</div></div>
  <div class="row" style="top:75.46px;"><svg style="left:69.5px;top:1.2px" width="6" height="7.4" viewBox="0 0 6 7.4"><circle cx="3" cy="4.3" r="2.4" fill="none" stroke="#d8d8d8" stroke-width="0.9"/><path d="M3 4.3V2.8M1.6 0.6H4.4M3 0.6V1.8" stroke="#d8d8d8" stroke-width="0.8"/></svg><div class="lab">Anchor Point</div><div class="val">0.0,0.0</div></div>
  <div class="row" style="top:85.08px;"><svg style="left:69.5px;top:1.2px" width="6" height="7.4" viewBox="0 0 6 7.4"><circle cx="3" cy="4.3" r="2.4" fill="none" stroke="#d8d8d8" stroke-width="0.9"/><path d="M3 4.3V2.8M1.6 0.6H4.4M3 0.6V1.8" stroke="#d8d8d8" stroke-width="0.8"/></svg><div class="lab">Position</div><div class="val">972.0,436.0</div></div>
  <div class="row" style="top:94.70px;"><svg style="left:69.5px;top:1.2px" width="6" height="7.4" viewBox="0 0 6 7.4"><circle cx="3" cy="4.3" r="2.4" fill="none" stroke="#d8d8d8" stroke-width="0.9"/><path d="M3 4.3V2.8M1.6 0.6H4.4M3 0.6V1.8" stroke="#d8d8d8" stroke-width="0.8"/></svg><div class="lab">Scale</div><div class="val" style="left:206.5px">341.0,341.0%</div><div style="left:195.8px;top:2.2px;width:8px;height:5.4px;border-radius:2px;background:#1a1a1a;"></div><svg style="left:197px;top:3.6px" width="6" height="3" viewBox="0 0 6 3"><rect x="0.3" y="0.4" width="2.6" height="2" rx="1" fill="none" stroke="#d0d0d0" stroke-width="0.6"/><rect x="3" y="0.4" width="2.6" height="2" rx="1" fill="none" stroke="#d0d0d0" stroke-width="0.6"/></svg></div>
  <div class="row" style="top:104.32px;"><svg style="left:69.5px;top:1.2px" width="6" height="7.4" viewBox="0 0 6 7.4"><circle cx="3" cy="4.3" r="2.4" fill="none" stroke="#d8d8d8" stroke-width="0.9"/><path d="M3 4.3V2.8M1.6 0.6H4.4M3 0.6V1.8" stroke="#d8d8d8" stroke-width="0.8"/></svg><div class="lab">Rotation</div><div class="val">0x+0.0°</div></div>
  <div class="row" style="top:113.94px;"><svg style="left:69.5px;top:1.2px" width="6" height="7.4" viewBox="0 0 6 7.4"><circle cx="3" cy="4.3" r="2.4" fill="none" stroke="#d8d8d8" stroke-width="0.9"/><path d="M3 4.3V2.8M1.6 0.6H4.4M3 0.6V1.8" stroke="#d8d8d8" stroke-width="0.8"/></svg><div class="lab">Opacity</div><div class="val">100%</div></div>
  <div class="row" style="top:123.56px;background:#2c2c2c;">
    <svg style="left:3px;top:1.6px" width="8" height="7" viewBox="0 0 8 7"><ellipse cx="4" cy="3.5" rx="3.4" ry="2.3" fill="none" stroke="#d4d4d4" stroke-width="0.9"/><circle cx="4" cy="3.5" r="1" fill="#d4d4d4"/></svg>
    <div class="sw" style="left:21px;top:0.8px;"></div><div class="sw" style="left:29px;top:0.8px;"></div>
    <svg style="left:42px;top:2.3px" width="5" height="5" viewBox="0 0 5 5"><path d="M0.4 0.2L4.6 2.5L0.4 4.8Z" fill="#f0f0f0"/></svg>
    <div style="left:49px;top:1.4px;width:7px;height:6.8px;background:#cc3434;"></div>
    <div class="t" style="left:61.5px;top:0;line-height:9.6px;font-size:6.6px;color:#d8d8d8;">2</div>
    <div style="left:78px;top:1.4px;width:7px;height:6.8px;background:#0c6c0c;"></div>
    <div class="t" style="left:88px;top:0;line-height:9.6px;font-size:6.7px;color:#d0d0d0;font-weight:bold;letter-spacing:-0.25px;">Deep Green Solid 1</div>
    <svg style="left:197px;top:1.8px" width="7" height="6" viewBox="0 0 7 6"><path d="M0.4 3.6Q3.5 -1.6 6.6 3.6Z" fill="#d8d8d8"/><path d="M3.5 3V5.6" stroke="#d8d8d8" stroke-width="0.8"/></svg>
    <div class="sw" style="left:206px;top:0.8px;width:6.5px;"></div>
    <svg style="left:214.5px;top:1.4px" width="7" height="7" viewBox="0 0 7 7"><path d="M0.6 6.4L6.4 0.6" stroke="#d8d8d8" stroke-width="1"/></svg>
    <div class="sw" style="left:239px;top:0.8px;width:6.5px;"></div><div class="sw" style="left:247.5px;top:0.8px;width:6.5px;"></div><div class="sw" style="left:256px;top:0.8px;width:6.5px;"></div>
    <svg style="left:273.5px;top:1.6px" width="7" height="7" viewBox="0 0 7 7"><circle cx="3.5" cy="3.5" r="2.7" fill="none" stroke="#a8a8a8" stroke-width="0.8"/><path d="M2 3.5H5" stroke="#a8a8a8" stroke-width="0.8"/></svg>
    <div style="left:284.5px;top:0.7px;width:50.5px;height:8.4px;background:#1c1c1c;"></div>
    <div class="t" style="left:288px;top:0;line-height:9.6px;font-size:6.6px;color:#cfcfcf;">None</div>
    <div class="dd" style="left:327.5px;top:3.4px;"></div>
  </div>
  <div style="left:345.5px;top:15.2px;width:2px;height:134px;background:#141414;"></div>
  <div style="left:347.5px;top:15.2px;width:420.5px;height:134px;background:#232323;"></div>
  <!-- navigator -->
  <div style="left:350.4px;top:19.2px;width:409.6px;height:4.8px;background:#747474;"></div>
  <div style="left:347.2px;top:19.2px;width:3px;height:4.8px;background:#2d9ae6;border-radius:1.5px 0 0 1.5px;"></div>
  <div style="left:757.4px;top:19.2px;width:3px;height:4.8px;background:#2d9ae6;border-radius:1px;"></div>
  <!-- track area -->
  <div style="left:347.5px;top:36px;width:409.5px;height:113.2px;background:#313131;"></div>
  <div style="left:350.4px;top:36px;width:406.6px;height:8.6px;background:#696969;"></div>
  <div style="left:347.5px;top:36px;width:2.6px;height:8.6px;background:#2d9ae6;border-radius:1px;"></div>
  <div style="left:756.5px;top:36px;width:3px;height:8.6px;background:#2d9ae6;"></div>
  <div style="left:350.4px;top:44.5px;width:406.6px;height:2.2px;background:#1bbf1b;"></div>
  <div style="left:350.4px;top:46.7px;width:406.6px;height:9px;background:#ae484c;"></div>
  <div style="left:350.4px;top:123.80000000000001px;width:406.6px;height:8.4px;background:#7a3638;"></div>
  <div style="left:757px;top:36px;width:3.5px;height:113.2px;background:#353535;"></div>
  <div style="left:756.7px;top:36px;width:3.3px;height:8.8px;background:#2d9ae6;border-radius:1px;"></div>
  <div style="left:760.5px;top:15.2px;width:7.5px;height:134px;background:#181818;"></div>
  <svg style="left:762.5px;top:37px" width="6" height="8" viewBox="0 0 6 8"><path d="M0.3 0.4H5.7V5L3 7.6L0.3 5Z" fill="#4e4e4e"/></svg>
  <div style="left:762px;top:48.5px;width:6px;height:7px;background:#cfcfcf;border-radius:2.5px 0 0 2.5px;"></div>
  <div style="left:763.4px;top:50px;width:3px;height:2.4px;background:#333;border-radius:1px;"></div>
  <div style="left:347.5px;top:66.3px;width:409.5px;height:1px;background:#262626;"></div>
  <div style="left:347.5px;top:75.6px;width:409.5px;height:1px;background:#262626;"></div>
  <div style="left:347.5px;top:85.2px;width:409.5px;height:1px;background:#262626;"></div>
  <div style="left:347.5px;top:94.6px;width:409.5px;height:1px;background:#262626;"></div>
  <div style="left:347.5px;top:104.2px;width:409.5px;height:1px;background:#262626;"></div>
  <div style="left:347.5px;top:113.6px;width:409.5px;height:1px;background:#262626;"></div>
  <div style="left:350.10px;top:32.4px;width:0.9px;height:3px;background:#8a8a8a;"></div>
  <div class="t" style="left:354.50px;top:23.2px;font-size:5.2px;color:#a0a0a0;">0s</div>
  <div style="left:417.85px;top:32.4px;width:0.9px;height:3px;background:#8a8a8a;"></div>
  <div class="t" style="left:408.25px;top:23.2px;width:20px;text-align:center;font-size:5.2px;color:#a0a0a0;">05s</div>
  <div style="left:485.60px;top:32.4px;width:0.9px;height:3px;background:#8a8a8a;"></div>
  <div class="t" style="left:476.00px;top:23.2px;width:20px;text-align:center;font-size:5.2px;color:#a0a0a0;">10s</div>
  <div style="left:553.35px;top:32.4px;width:0.9px;height:3px;background:#8a8a8a;"></div>
  <div class="t" style="left:543.75px;top:23.2px;width:20px;text-align:center;font-size:5.2px;color:#a0a0a0;">15s</div>
  <div style="left:621.10px;top:32.4px;width:0.9px;height:3px;background:#8a8a8a;"></div>
  <div class="t" style="left:611.50px;top:23.2px;width:20px;text-align:center;font-size:5.2px;color:#a0a0a0;">20s</div>
  <div style="left:688.85px;top:32.4px;width:0.9px;height:3px;background:#8a8a8a;"></div>
  <div class="t" style="left:679.25px;top:23.2px;width:20px;text-align:center;font-size:5.2px;color:#a0a0a0;">25s</div>
  <div style="left:756.60px;top:32.4px;width:0.9px;height:3px;background:#8a8a8a;"></div>
  <div class="t" style="left:752.00px;top:23.2px;font-size:5.2px;color:#a0a0a0;">30s</div>
  <div style="left:349.9px;top:26px;width:1px;height:123.2px;background:#c32626;"></div>
  <svg style="left:347.5px;top:25.5px" width="6" height="9" viewBox="0 0 6 9"><path d="M0.3 0.5H5.7V5.6L3 8.6L0.3 5.6Z" fill="#2d9ae6"/></svg>
  <svg style="left:348.4px;top:57.6px" width="4" height="7" viewBox="0 0 4 7"><path d="M0.6 0.4H3.4M2 0.4V6.6M0.6 6.6H3.4" stroke="#dcdcdc" stroke-width="0.9" fill="none"/></svg>
  <svg style="left:348.4px;top:67.2px" width="4" height="7" viewBox="0 0 4 7"><path d="M0.6 0.4H3.4M2 0.4V6.6M0.6 6.6H3.4" stroke="#dcdcdc" stroke-width="0.9" fill="none"/></svg>
  <svg style="left:348.4px;top:76.9px" width="4" height="7" viewBox="0 0 4 7"><path d="M0.6 0.4H3.4M2 0.4V6.6M0.6 6.6H3.4" stroke="#dcdcdc" stroke-width="0.9" fill="none"/></svg>
  <svg style="left:348.4px;top:86.5px" width="4" height="7" viewBox="0 0 4 7"><path d="M0.6 0.4H3.4M2 0.4V6.6M0.6 6.6H3.4" stroke="#dcdcdc" stroke-width="0.9" fill="none"/></svg>
  <svg style="left:348.4px;top:96.1px" width="4" height="7" viewBox="0 0 4 7"><path d="M0.6 0.4H3.4M2 0.4V6.6M0.6 6.6H3.4" stroke="#dcdcdc" stroke-width="0.9" fill="none"/></svg>
  <svg style="left:348.4px;top:105.7px" width="4" height="7" viewBox="0 0 4 7"><path d="M0.6 0.4H3.4M2 0.4V6.6M0.6 6.6H3.4" stroke="#dcdcdc" stroke-width="0.9" fill="none"/></svg>
  <svg style="left:348.4px;top:115.3px" width="4" height="7" viewBox="0 0 4 7"><path d="M0.6 0.4H3.4M2 0.4V6.6M0.6 6.6H3.4" stroke="#dcdcdc" stroke-width="0.9" fill="none"/></svg>
  <div style="left:0;top:148.8px;width:768px;height:11.2px;background:#121212;"></div>
  <div style="left:1px;top:150.2px;width:345px;height:8.4px;background:#202020;"></div>
  <svg style="left:4px;top:151px" width="8" height="8" viewBox="0 0 8 8"><path d="M0.4 1.4L3.4 0.4L7 2.4V6.4L4 7.6L0.4 5.4Z" fill="#2d9ae6"/></svg>
  <svg style="left:14px;top:151px" width="8" height="8" viewBox="0 0 8 8"><circle cx="3" cy="3" r="2.4" fill="none" stroke="#c8c8c8" stroke-width="0.8"/><rect x="3.4" y="3.4" width="4" height="4" fill="#202020" stroke="#c8c8c8" stroke-width="0.8"/></svg>
  <svg style="left:24.5px;top:150.8px" width="6" height="8.4" viewBox="0 0 6 8.4"><path d="M1 0.4H5M1 8H5M1.4 2.2H4.6V6.2H1.4Z M0 4.2H6" fill="none" stroke="#c8c8c8" stroke-width="0.8"/></svg>
  <div style="left:195px;top:150.2px;width:75.5px;height:8.4px;background:#262626;"></div>
  <div class="t" style="left:201px;top:150px;font-size:5.65px;color:#c8c8c8;">Toggle Switches / Modes</div>
  <div style="left:335px;top:150.2px;width:72.5px;height:8.4px;background:#2a2a2a;"></div>
  <svg style="left:349.5px;top:154.5px" width="5.5" height="3" viewBox="0 0 5 3"><path d="M0 3L1.6 0.8L2.6 1.8L3.4 1L5 3Z" fill="#c4c4c4"/></svg>
  <div style="left:367px;top:156px;width:22px;height:0.8px;background:#161616;"></div>
  <svg style="left:361px;top:151.5px" width="6" height="7" viewBox="0 0 6 7"><path d="M0.2 7V2.8L3 0.2L5.8 2.8V7Z" fill="#b4b4b4"/></svg>
  <svg style="left:394.4px;top:152px" width="10" height="6" viewBox="0 0 10 6"><path d="M0 6L3 1L5 3.4L6.6 0.6L10 6Z" fill="#c8c8c8"/></svg>
  <div style="left:761px;top:150.4px;width:7px;height:8.2px;background:#272727;"></div>
</div>
<div style="left:0;top:38.5px;width:1px;height:372.5px;background:#151515;"></div>
<div id="menu" style="left:108px;top:23.6px;width:158.2px;height:305.2px;background:#f0f0f0;box-shadow:0.6px 0.8px 1px rgba(0,0,0,.55);">
  <div class="i" style="top:3.2px;color:#0c0c0c">Effect Controls</div><div class="s" style="top:3.2px;color:#0c0c0c">F3</div>
  <div class="i" style="top:15.6px;color:#0c0c0c">Linear Wipe</div><div class="s" style="top:15.6px;color:#0c0c0c">Ctrl+Alt+Shift+E</div>
  <div class="i" style="top:28.0px;color:#9b9b9b">Remove All</div><div class="s" style="top:28.0px;color:#9b9b9b">Ctrl+Shift+E</div>
  <div class="i" style="top:44.8px">3D Channel</div><div class="a" style="top:47.4px"></div>
  <div class="i" style="top:57.2px">Audio</div><div class="a" style="top:59.8px"></div>
  <div class="i" style="top:69.6px">Blur &amp; Sharpen</div><div class="a" style="top:72.2px"></div>
  <div class="i" style="top:82.0px">Channel</div><div class="a" style="top:84.6px"></div>
  <div class="i" style="top:94.4px">CINEMA 4D</div><div class="a" style="top:97.0px"></div>
  <div class="i" style="top:106.8px">Color Correction</div><div class="a" style="top:109.4px"></div>
  <div class="i" style="top:119.3px">Distort</div><div class="a" style="top:121.9px"></div>
  <div class="i" style="top:131.7px">Expression Controls</div><div class="a" style="top:134.3px"></div>
  <div class="i" style="top:144.1px">Generate</div><div class="a" style="top:146.7px"></div>
  <div class="i" style="top:156.5px">Keying</div><div class="a" style="top:159.1px"></div>
  <div class="i" style="top:168.9px">Matte</div><div class="a" style="top:171.5px"></div>
  <div class="i" style="top:181.3px">Noise &amp; Grain</div><div class="a" style="top:183.9px"></div>
  <div class="i" style="top:193.7px">Obsolete</div><div class="a" style="top:196.3px"></div>
  <div class="i" style="top:206.1px">Perspective</div><div class="a" style="top:208.7px"></div>
  <div class="i" style="top:218.5px">Simulation</div><div class="a" style="top:221.1px"></div>
  <div class="i" style="top:230.9px">Stylize</div><div class="a" style="top:233.5px"></div>
  <div class="i" style="top:243.4px">Synthetic Aperture</div><div class="a" style="top:246.0px"></div>
  <div class="i" style="top:255.8px">Text</div><div class="a" style="top:258.4px"></div>
  <div class="i" style="top:268.2px">Time</div><div class="a" style="top:270.8px"></div>
  <div class="i" style="top:280.6px">Transition</div><div class="a" style="top:283.2px"></div>
  <div class="i" style="top:293.0px">Utility</div><div class="a" style="top:295.6px"></div>
</div>
</body></html>
